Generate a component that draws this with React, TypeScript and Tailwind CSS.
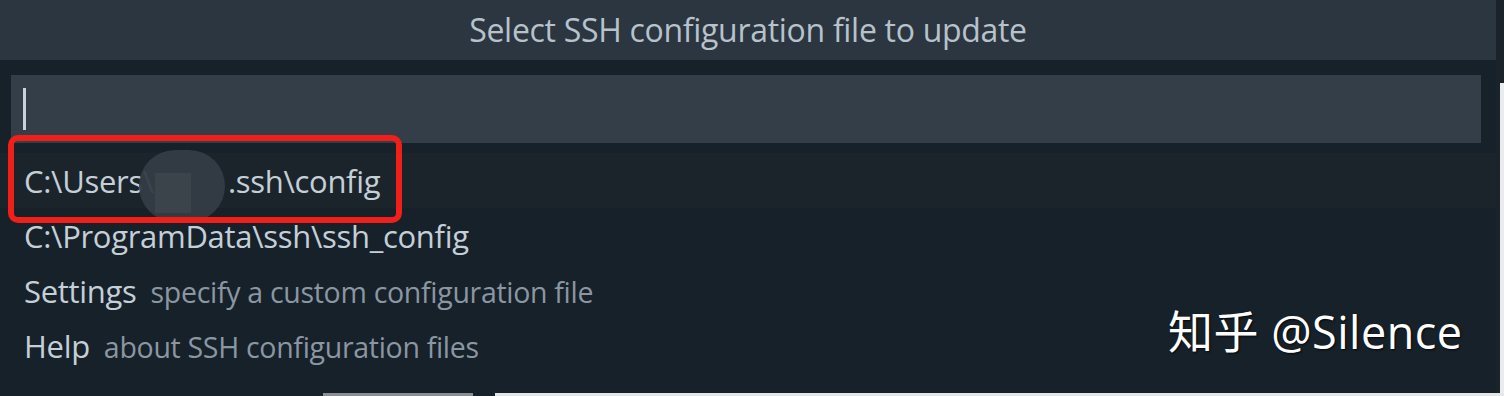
import React from 'react';

const font = { fontFamily: '"Open Sans", "Noto Sans", "Noto Sans CJK SC", sans-serif' };

type Item = { key: string; label: React.ReactNode; detail?: string; selected?: boolean };

const items: Item[] = [
  {
    key: 'user',
    label: (
      <>
        C:\Users\
        <span className="inline-block w-[74px]" />
        .ssh\config
      </>
    ),
    selected: true,
  },
  { key: 'program', label: 'C:\\ProgramData\\ssh\\ssh_config' },
  { key: 'settings', label: 'Settings', detail: 'specify a custom configuration file' },
  { key: 'help', label: 'Help', detail: 'about SSH configuration files' },
];

const Row: React.FC<{ item: Item }> = ({ item }) => (
  <div
    className={`h-[55px] flex items-center pl-[24px] gap-[14px] whitespace-nowrap ${
      item.selected ? 'bg-[#1c242b]' : ''
    }`}
  >
    <span className="text-[31px] leading-[40px] text-[#c4cfd8] tracking-[-0.3px]">{item.label}</span>
    {item.detail && (
      <span className="text-[28.5px] leading-[40px] text-[#8a97a2] tracking-[-0.3px] pt-[2px]">{item.detail}</span>
    )}
  </div>
);

export default function App() {
  return (
    <div className="w-[1504px] h-[396px] overflow-hidden bg-[#17212a] flex flex-col" style={font}>
      <div className="flex h-[393px]">
        <div className="relative w-[1496px] flex flex-col">
          <div className="h-[60px] bg-[#2b3640] flex items-center justify-center text-[32px] text-[#b7c2cb] tracking-[-0.3px]">
            Select SSH configuration file to update
          </div>
          <div className="flex-1 bg-[#17212a] pt-[15px]">
            <div className="ml-[11px] mr-[15px] h-[68px] bg-[#333e49] flex items-center pl-[12px]">
              <div className="w-[3px] h-[42px] bg-[#c8d2da]" />
            </div>
            <div className="mt-[10px]">
              {items.map((it) => (
                <Row key={it.key} item={it} />
              ))}
            </div>
          </div>

          {/* redacted username blur */}
          <div className="absolute left-[139px] top-[150px] w-[86px] h-[72px] rounded-full bg-[#343c44] opacity-95" />
          <div className="absolute left-[155px] top-[173px] w-[36px] h-[40px] bg-[#3b434b]" />

          {/* annotation box */}
          <div className="absolute left-[8px] top-[135px] w-[394px] h-[88px] rounded-[10px] border-[6px] border-[#f01f1a]" />

          {/* watermark */}
          <div
            className="absolute left-[1168px] top-[298px] text-[45px] text-white whitespace-nowrap tracking-[0.5px]"
            style={{ textShadow: '1px 1px 2px rgba(0,0,0,0.8)' }}
          >
            知乎 @Silence
          </div>
        </div>
        <div className="w-[8px] flex flex-col bg-[#1a222a]">
          <div className="h-[83px]" />
          <div className="flex-1 ml-[4px] bg-[#e9ebee]" />
        </div>
      </div>
      <div className="h-[3px] flex">
        <div className="w-[323px] bg-[#17212a]" />
        <div className="w-[150px] bg-[#8b8f93]" />
        <div className="w-[22px] bg-[#17212a]" />
        <div className="flex-1 bg-[#e4e6e8]" />
      </div>
    </div>
  );
}
